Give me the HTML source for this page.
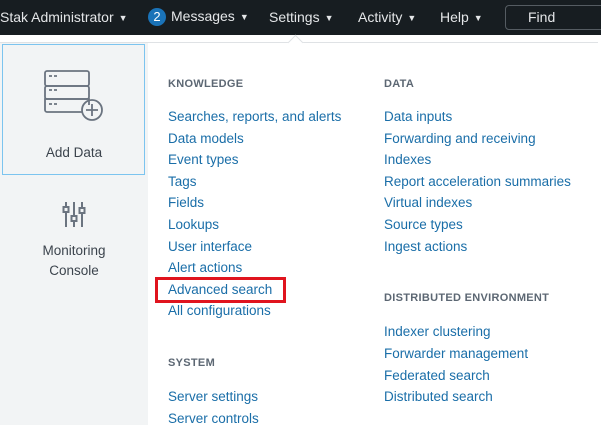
<!DOCTYPE html>
<html><head><style>
body{margin:0;width:601px;height:425px;overflow:hidden;background:#fff;font-family:"Liberation Sans",sans-serif;position:relative}
.nav{position:absolute;left:0;top:0;width:601px;height:35px;background:#171d21;color:#e4e6e8;font-size:14px}
.nav>span{position:absolute;top:9px;white-space:nowrap}
.car{font-size:9px;vertical-align:1px;margin-left:5px}
.badge{display:inline-block;width:18px;height:18px;border-radius:50%;background:#1a73b8;color:#fff;text-align:center;line-height:18px;font-size:13px;margin-right:5px;vertical-align:0}
.find{position:absolute;left:505px;top:5px;width:110px;height:25px;border:1px solid #555c62;border-radius:4px;box-sizing:border-box}
.panel{position:absolute;left:0;top:42px;width:598px;height:383px;background:#fff;border-top:1px solid #dfe2e5}
.arrow{position:absolute;left:290px;top:37px;width:10px;height:10px;background:#fff;transform:rotate(45deg);border-left:1px solid #dfe2e5;border-top:1px solid #dfe2e5}
.left{position:absolute;left:0;top:43px;width:148px;height:382px;background:#f2f4f5}
.add{position:absolute;left:2px;top:44px;width:143px;height:131px;border:1px solid #7cc4ef;box-sizing:border-box;background:#f2f4f5}
.lbl{position:absolute;color:#3c444d;font-size:13.5px;text-align:center;width:148px;left:0}
.h{position:absolute;font-size:11px;font-weight:bold;color:#5c6773;letter-spacing:.3px}
.a{position:absolute;font-size:13.5px;color:#1a6ea8;white-space:nowrap}
.red{position:absolute;left:155px;top:277px;width:131px;height:26px;border:3px solid #e0141e;box-sizing:border-box}
</style></head><body>
<div class="nav">
<span style="left:0">Stak Administrator<span class="car">▼</span></span>
<span style="left:148px;top:8px"><span class="badge">2</span>Messages<span class="car">▼</span></span>
<span style="left:269px">Settings<span class="car">▼</span></span>
<span style="left:358px">Activity<span class="car">▼</span></span>
<span style="left:440px">Help<span class="car">▼</span></span>
<div class="find"></div>
<span style="left:528px">Find</span>
</div>
<div class="panel"></div>
<div class="arrow"></div>
<div class="left"></div>
<div class="add"></div>
<svg style="position:absolute;left:40px;top:68px" width="66" height="56" viewBox="0 0 66 56" fill="none" stroke="#6b7480" stroke-width="1.8">
<rect x="5" y="3" width="44" height="15" rx="2"/><rect x="5" y="18" width="44" height="13" rx="2"/>
<path d="M42 44H7a2 2 0 0 1-2-2V31h44v6"/>
<path d="M9 8h3M14 8h3M9 22h3M14 22h3M9 36h3M14 36h3"/>
<circle cx="52" cy="42" r="10"/><path d="M52 36v12M46 42h12"/>
</svg>
<div class="lbl" style="top:145px">Add Data</div>
<svg style="position:absolute;left:62px;top:201px" width="24" height="26" viewBox="0 0 24 26" fill="none" stroke="#6b7480" stroke-width="2">
<path d="M4 1v25M12 1v25M20 1v25"/><rect x="1.5" y="6" width="5" height="5" fill="#f2f4f5"/><rect x="9.5" y="15" width="5" height="5" fill="#f2f4f5"/><rect x="17.5" y="7" width="5" height="5" fill="#f2f4f5"/>
</svg>
<div class="lbl" style="top:243px">Monitoring</div>
<div class="lbl" style="top:263px">Console</div>

<div class="h" style="left:168px;top:78px">KNOWLEDGE</div>
<div class="a" style="left:168px;top:109px">Searches, reports, and alerts</div>
<div class="a" style="left:168px;top:131px">Data models</div>
<div class="a" style="left:168px;top:152px">Event types</div>
<div class="a" style="left:168px;top:174px">Tags</div>
<div class="a" style="left:168px;top:195px">Fields</div>
<div class="a" style="left:168px;top:217px">Lookups</div>
<div class="a" style="left:168px;top:239px">User interface</div>
<div class="a" style="left:168px;top:260px">Alert actions</div>
<div class="a" style="left:168px;top:282px">Advanced search</div>
<div class="a" style="left:168px;top:303px">All configurations</div>
<div class="red"></div>
<div class="h" style="left:168px;top:357px">SYSTEM</div>
<div class="a" style="left:168px;top:389px">Server settings</div>
<div class="a" style="left:168px;top:411px">Server controls</div>

<div class="h" style="left:384px;top:78px">DATA</div>
<div class="a" style="left:384px;top:109px">Data inputs</div>
<div class="a" style="left:384px;top:131px">Forwarding and receiving</div>
<div class="a" style="left:384px;top:152px">Indexes</div>
<div class="a" style="left:384px;top:174px">Report acceleration summaries</div>
<div class="a" style="left:384px;top:195px">Virtual indexes</div>
<div class="a" style="left:384px;top:217px">Source types</div>
<div class="a" style="left:384px;top:239px">Ingest actions</div>
<div class="h" style="left:384px;top:292px">DISTRIBUTED ENVIRONMENT</div>
<div class="a" style="left:384px;top:324px">Indexer clustering</div>
<div class="a" style="left:384px;top:346px">Forwarder management</div>
<div class="a" style="left:384px;top:368px">Federated search</div>
<div class="a" style="left:384px;top:389px">Distributed search</div>
</body></html>
